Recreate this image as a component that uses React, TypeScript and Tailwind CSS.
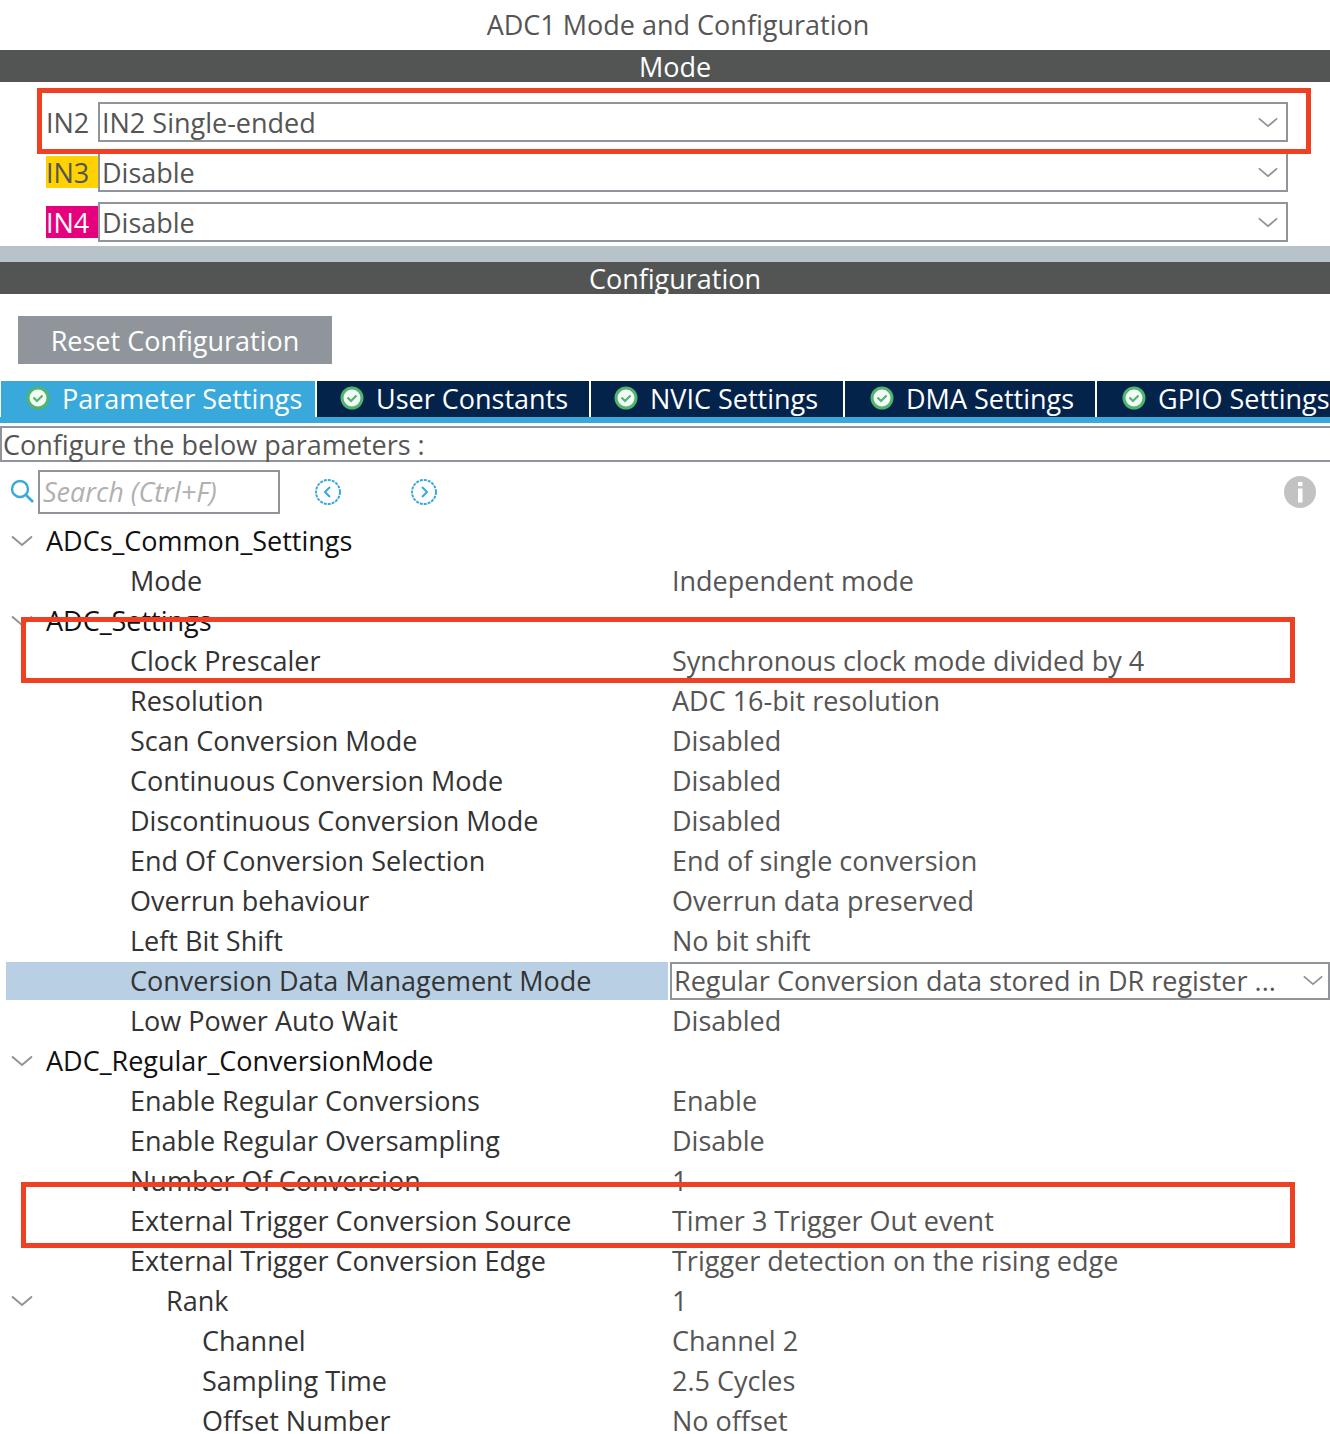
const font = "font-['Open_Sans','DejaVu_Sans',sans-serif]";

const Chevron = ({ className }: { className: string }) => (
  <svg viewBox="0 0 22 12" fill="none" className={className}>
    <path d="M1 1.5 L11 10 L21 1.5" stroke="#8f9499" strokeWidth="2" />
  </svg>
);

const Check = () => (
  <svg viewBox="0 0 24 24" className="h-6 w-6 shrink-0">
    <circle cx="12" cy="12" r="10" fill="#f4faf5" stroke="#4fb56f" strokeWidth="3" />
    <path d="M7.5 11.5 L11 15 L16.5 9.5" fill="none" stroke="#4fb56f" strokeWidth="2.2" />
  </svg>
);

const CircleArrow = ({ d }: { d: string }) => (
  <svg viewBox="0 0 28 28" fill="none" className="h-7 w-7">
    <circle cx="14" cy="14" r="12" stroke="#39a9dc" strokeWidth="2" strokeDasharray="3 1" />
    <path d={d} stroke="#39a9dc" strokeWidth="2" />
  </svg>
);

const modeRows = [
  { pin: "IN2", value: "IN2 Single-ended", badge: "" },
  { pin: "IN3", value: "Disable", badge: "bg-[#ffd200]" },
  { pin: "IN4", value: "Disable", badge: "bg-[#e6007e] text-white" },
];

const tabs = [
  { title: "Parameter Settings", width: "w-[314px]", pad: "pl-[25px]", active: true },
  { title: "User Constants", width: "w-[272px]", pad: "pl-[23px]", active: false },
  { title: "NVIC Settings", width: "w-[252px]", pad: "pl-[23px]", active: false },
  { title: "DMA Settings", width: "w-[250px]", pad: "pl-[25px]", active: false },
  { title: "GPIO Settings", width: "min-w-0 flex-1", pad: "pl-[25px]", active: false },
];

type Row = { label: string; value?: string; indent: string; head?: boolean; caret?: boolean; selected?: boolean };

const l1 = "pl-[130px]";
const rows: Row[] = [
  { label: "ADCs_Common_Settings", indent: "pl-[46px]", head: true, caret: true },
  { label: "Mode", value: "Independent mode", indent: l1 },
  { label: "ADC_Settings", indent: "pl-[46px]", head: true, caret: true },
  { label: "Clock Prescaler", value: "Synchronous clock mode divided by 4", indent: l1 },
  { label: "Resolution", value: "ADC 16-bit resolution", indent: l1 },
  { label: "Scan Conversion Mode", value: "Disabled", indent: l1 },
  { label: "Continuous Conversion Mode", value: "Disabled", indent: l1 },
  { label: "Discontinuous Conversion Mode", value: "Disabled", indent: l1 },
  { label: "End Of Conversion Selection", value: "End of single conversion", indent: l1 },
  { label: "Overrun behaviour", value: "Overrun data preserved", indent: l1 },
  { label: "Left Bit Shift", value: "No bit shift", indent: l1 },
  { label: "Conversion Data Management Mode", value: "Regular Conversion data stored in DR register ...", indent: l1, selected: true },
  { label: "Low Power Auto Wait", value: "Disabled", indent: l1 },
  { label: "ADC_Regular_ConversionMode", indent: "pl-[46px]", head: true, caret: true },
  { label: "Enable Regular Conversions", value: "Enable", indent: l1 },
  { label: "Enable Regular Oversampling", value: "Disable", indent: l1 },
  { label: "Number Of Conversion", value: "1", indent: l1 },
  { label: "External Trigger Conversion Source", value: "Timer 3 Trigger Out event", indent: l1 },
  { label: "External Trigger Conversion Edge", value: "Trigger detection on the rising edge", indent: l1 },
  { label: "Rank", value: "1", indent: "pl-[166px]", caret: true },
  { label: "Channel", value: "Channel 2", indent: "pl-[202px]" },
  { label: "Sampling Time", value: "2.5 Cycles", indent: "pl-[202px]" },
  { label: "Offset Number", value: "No offset", indent: "pl-[202px]" },
];

const TreeRow = ({ row }: { row: Row }) => (
  <div className="relative flex h-10 items-center">
    {row.caret && <Chevron className="absolute left-[11px] top-[14px] h-[12px] w-[22px]" />}
    {row.selected ? (
      <>
        <div className="ml-[6px] flex h-[38px] w-[662px] items-center bg-[#b8cfe4] pb-0.5 pl-[124px] text-[#333]">{row.label}</div>
        <div className="ml-[2px] flex h-[38px] flex-1 items-center justify-between border-2 border-[#8f959a] pb-0.5 pl-[2px] pr-[4px] text-[#555]">
          <span>{row.value}</span>
          <Chevron className="h-[11px] w-[22px]" />
        </div>
      </>
    ) : (
      <>
        <div className={`w-[672px] shrink-0 pb-0.5 ${row.indent} ${row.head ? "text-[#111]" : "text-[#333]"}`}>{row.label}</div>
        <div className="pb-0.5 text-[#555]">{row.value}</div>
      </>
    )}
  </div>
);

const Callout = ({ className }: { className: string }) => (
  <div className={`absolute border-[5px] border-[#ee4023] ${className}`} />
);

export default function App() {
  return (
    <div className={`relative h-[1434px] overflow-hidden bg-white text-[27px] leading-none text-[#555] ${font}`}>
      <div className="flex h-[50px] items-center justify-center pb-0.5 pl-[26px]">ADC1 Mode and Configuration</div>
      <div className="flex h-8 items-center justify-center bg-[#535554] pl-5 text-white">Mode</div>

      <div className="flex flex-col gap-[10px] pb-1 pl-[46px] pr-[42px] pt-5">
        {modeRows.map((row) => (
          <div key={row.pin} className="flex h-10 items-center">
            <div className={`flex h-8 w-[52px] shrink-0 items-center ${row.badge}`}>{row.pin}</div>
            <div className="flex h-10 flex-1 items-center justify-between border-2 border-[#8f959a] pl-[2px] pr-[7px]">
              <span>{row.value}</span>
              <Chevron className="h-[11px] w-[22px]" />
            </div>
          </div>
        ))}
      </div>

      <div className="h-4 bg-[#b7c3c9]" />
      <div className="flex h-8 items-center justify-center bg-[#535554] pl-5 text-white">Configuration</div>

      <div className="pl-[18px] pt-[22px]">
        <div className="flex h-12 w-[314px] items-center justify-center bg-[#8f959a] text-white">Reset Configuration</div>
      </div>

      <div className="mt-[17px] border-b-[6px] border-[#39a9dc] pl-px">
        <div className="flex h-9 gap-[2px]">
          {tabs.map((tab) => (
            <div
              key={tab.title}
              className={`flex items-center gap-[12px] whitespace-nowrap pb-0.5 text-white ${tab.width} ${tab.pad} ${tab.active ? "bg-[#39a9dc]" : "bg-[#03234b]"}`}
            >
              <Check />
              <span>{tab.title}</span>
            </div>
          ))}
        </div>
      </div>

      <div className="mt-[3px] flex h-9 items-center border-y-2 border-l-2 border-[#8f959a] pl-px">Configure the below parameters :</div>

      <div className="relative flex h-[59px] items-start pt-2">
        <svg viewBox="0 0 24 24" fill="none" className="ml-[10px] mt-[9px] h-6 w-6 shrink-0">
          <circle cx="10" cy="10" r="8" stroke="#39a9dc" strokeWidth="2.4" />
          <path d="M16 16 L23 23" stroke="#39a9dc" strokeWidth="2.6" />
        </svg>
        <div className="ml-[4px] flex h-11 w-[242px] items-center border-2 border-[#8f959a] pb-0.5 pl-[3px] italic text-[#b0b0b0]">Search (Ctrl+F)</div>
        <div className="ml-[34px] mt-2 flex gap-[68px]">
          <CircleArrow d="M16 9 L11 14 L16 19" />
          <CircleArrow d="M12 9 L17 14 L12 19" />
        </div>
        <svg viewBox="0 0 32 32" className="absolute right-[14px] top-[14px] h-8 w-8">
          <circle cx="16" cy="16" r="16" fill="#c2c2c2" />
          <rect x="14" y="12.5" width="4.5" height="14" fill="#fff" />
          <rect x="14" y="6" width="4.5" height="4" fill="#fff" />
        </svg>
      </div>

      <div className="flex flex-col">
        {rows.map((row) => (
          <TreeRow key={row.label} row={row} />
        ))}
      </div>

      <Callout className="left-[37px] top-[88px] h-[66px] w-[1274px]" />
      <Callout className="left-[21px] top-[617px] h-[66px] w-[1274px]" />
      <Callout className="left-[21px] top-[1182px] h-[66px] w-[1274px]" />
    </div>
  );
}
